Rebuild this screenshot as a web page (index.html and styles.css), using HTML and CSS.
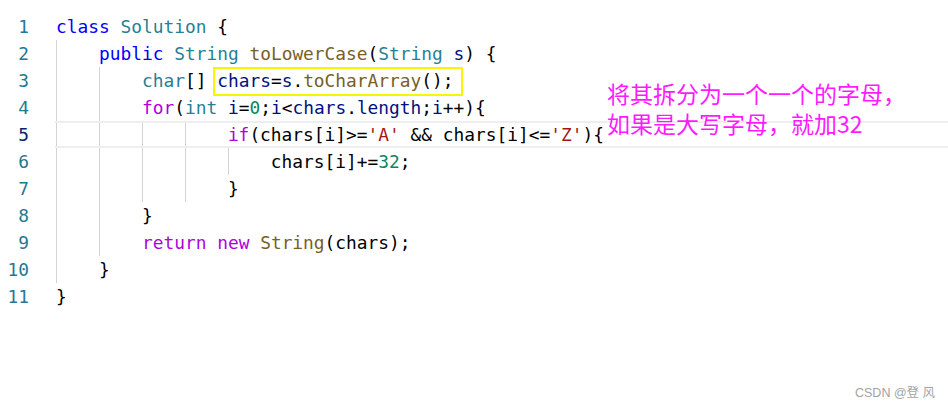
FILE: index.html
```html
<!DOCTYPE html>
<html lang="zh">
<head>
<meta charset="utf-8">
<link rel="stylesheet" href="styles.css">
</head>
<body>
<div class="editor">
  <div class="gutter">
    <div class="ln">1</div><div class="ln">2</div><div class="ln">3</div><div class="ln">4</div>
    <div class="ln cur">5</div><div class="ln">6</div><div class="ln">7</div><div class="ln">8</div>
    <div class="ln">9</div><div class="ln">10</div><div class="ln">11</div>
  </div>
  <div class="code">
    <div class="line"><span class="kw">class</span> <span class="ty">Solution</span> {</div>
    <div class="line"><span class="ind"></span><span class="kw">public</span> <span class="ty">String</span> <span class="fn">toLowerCase</span>(<span class="ty">String</span> <span class="va">s</span>) {</div>
    <div class="line"><span class="ind"></span><span class="ind"></span><span class="ty">char</span>[] <span class="hl"><span class="va">chars</span>=<span class="va">s</span>.<span class="fn">toCharArray</span>();</span></div>
    <div class="line"><span class="ind"></span><span class="ind"></span><span class="ctl">for</span>(<span class="ty">int</span> <span class="va">i</span>=<span class="num">0</span>;<span class="va">i</span>&lt;<span class="va">chars</span>.<span class="va">length</span>;<span class="va">i</span>++){</div>
    <div class="line current"><span class="ind"></span><span class="ind"></span><span class="ind"></span><span class="ind"></span><span class="ctl">if</span>(chars[i]&gt;=<span class="str">'A'</span> &amp;&amp; chars[i]&lt;=<span class="str">'Z'</span>){</div>
    <div class="line"><span class="ind"></span><span class="ind"></span><span class="ind"></span><span class="ind"></span><span class="ind"></span>chars[i]+=<span class="num">32</span>;</div>
    <div class="line"><span class="ind"></span><span class="ind"></span><span class="ind"></span><span class="ind"></span>}</div>
    <div class="line"><span class="ind"></span><span class="ind"></span>}</div>
    <div class="line"><span class="ind"></span><span class="ind"></span><span class="ctl">return</span> <span class="ctl">new</span> <span class="fn">String</span>(chars);</div>
    <div class="line"><span class="ind"></span>}</div>
    <div class="line">}</div>
  </div>
</div>
<div class="note">将其拆分为一个一个的字母，<br>如果是大写字母，就加32</div>
<div class="mark">CSDN @登 风</div>
</body>
</html>
```
FILE: styles.css
```css
html, body {
  margin: 0;
  padding: 0;
  background: #ffffff;
  width: 948px;
  height: 406px;
  overflow: hidden;
}
.editor {
  display: flex;
  padding-top: 13px;
  font-family: "DejaVu Sans Mono", "Liberation Mono", monospace;
  font-size: 17.85px;
  color: #000000;
}
.gutter {
  width: 56px;
  flex: none;
}
.ln {
  height: 27px;
  line-height: 27px;
  text-align: right;
  padding-right: 27px;
  color: #237893;
  box-sizing: border-box;
}
.ln.cur {
  color: #0b216f;
}
.code {
  flex: 1;
}
.line {
  height: 27px;
  line-height: 27px;
  white-space: pre;
  position: relative;
}
.line.current::before {
  content: "";
  position: absolute;
  left: -1px;
  right: 0;
  top: 0;
  bottom: 0;
  border-top: 2px solid #eeeeee;
  border-bottom: 2px solid #eeeeee;
}
.ind {
  display: inline-block;
  width: 4ch;
  height: 27px;
  vertical-align: top;
  border-left: 1px solid #d3d3d3;
  box-sizing: border-box;
}
.kw { color: #0000ff; }
.ty { color: #267f99; }
.fn { color: #795e26; }
.va { color: #001080; }
.ctl { color: #af00db; }
.num { color: #098658; }
.str { color: #a31515; }
.hl {
  position: relative;
}
.hl::after {
  content: "";
  position: absolute;
  left: -4px;
  right: -9px;
  top: -3px;
  bottom: -5px;
  border: 2px solid #f6f600;
}
.note {
  position: absolute;
  left: 607px;
  top: 78px;
  font-family: "Noto Sans CJK SC", sans-serif;
  font-size: 23px;
  line-height: 30px;
  color: #ff1aff;
}
.mark {
  position: absolute;
  left: 855px;
  top: 382px;
  font-family: "Liberation Sans", "Noto Sans CJK SC", sans-serif;
  font-size: 12.5px;
  color: #a3a3a3;
}
```
